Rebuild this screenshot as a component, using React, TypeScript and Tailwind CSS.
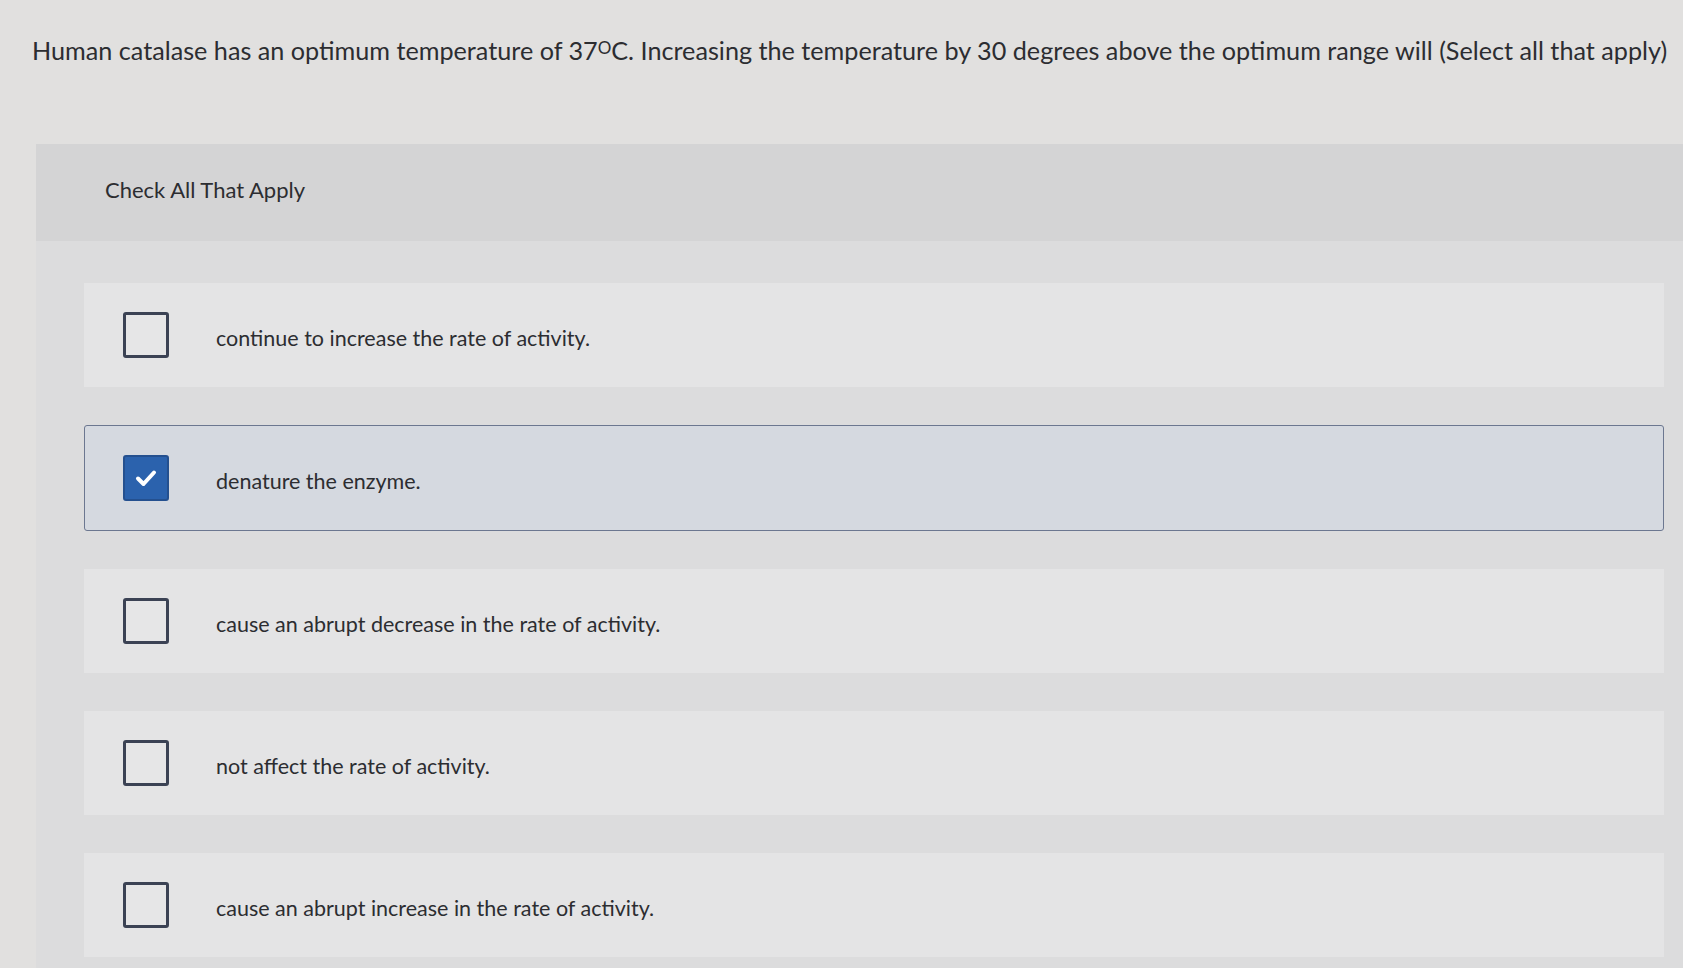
import { useState } from 'react';

const options = [
  'continue to increase the rate of activity.',
  'denature the enzyme.',
  'cause an abrupt decrease in the rate of activity.',
  'not affect the rate of activity.',
  'cause an abrupt increase in the rate of activity.',
];

function CheckBox({ checked }: { checked: boolean }) {
  if (checked) {
    return (
      <div className="w-[46px] h-[46px] rounded-[3px] bg-[#2b62ad] border-2 border-[#24508f] flex items-center justify-center shrink-0">
        <svg width="22" height="18" viewBox="0 0 22 18" fill="none">
          <path d="M3 9.5l5.5 5.5L19 3.5" stroke="white" strokeWidth="4" strokeLinecap="round" strokeLinejoin="round" />
        </svg>
      </div>
    );
  }
  return <div className="w-[46px] h-[46px] rounded-[3px] border-[3px] border-[#3b4254] bg-[#e6e6e7] shrink-0" />;
}

export default function App() {
  const [selected, setSelected] = useState<number[]>([1]);

  const toggle = (i: number) =>
    setSelected((s) => (s.includes(i) ? s.filter((x) => x !== i) : [...s, i]));

  return (
    <div className="w-[1683px] h-[968px] overflow-hidden bg-[#e1e0df] text-[#2c2d31] font-['Lato',sans-serif]">
      {/* Question */}
      <p className="pl-8 pt-[32px] text-[25.2px] whitespace-nowrap">
        Human catalase has an optimum temperature of 37<sup className="text-[17px] align-[6px] top-0">O</sup>C. Increasing the temperature by 30 degrees above the optimum range will (Select all that apply)
      </p>

      {/* Answer panel */}
      <div className="ml-9 mt-[74px] bg-[#dcdcdd]">
        <div className="h-[97px] bg-[#d4d4d5] flex items-center pl-[69px] pb-[6px] text-[22px]">Check All That Apply</div>

        <div className="flex flex-col gap-[38px] pt-[42px] pl-12 pr-[19px] pb-10">
          {options.map((text, i) => {
            const on = selected.includes(i);
            return (
              <div
                key={i}
                onClick={() => toggle(i)}
                className={
                  on
                    ? 'h-[106px] flex items-center pl-[38px] bg-[#d5d9e0] border-[1.5px] border-[#6c7790] rounded-[3px] cursor-pointer'
                    : 'h-[104px] flex items-center pl-[39px] bg-[#e4e4e5] cursor-pointer'
                }
              >
                <CheckBox checked={on} />
                <span className="ml-[47px] pt-[6px] text-[21.5px]">{text}</span>
              </div>
            );
          })}
        </div>
      </div>
    </div>
  );
}
